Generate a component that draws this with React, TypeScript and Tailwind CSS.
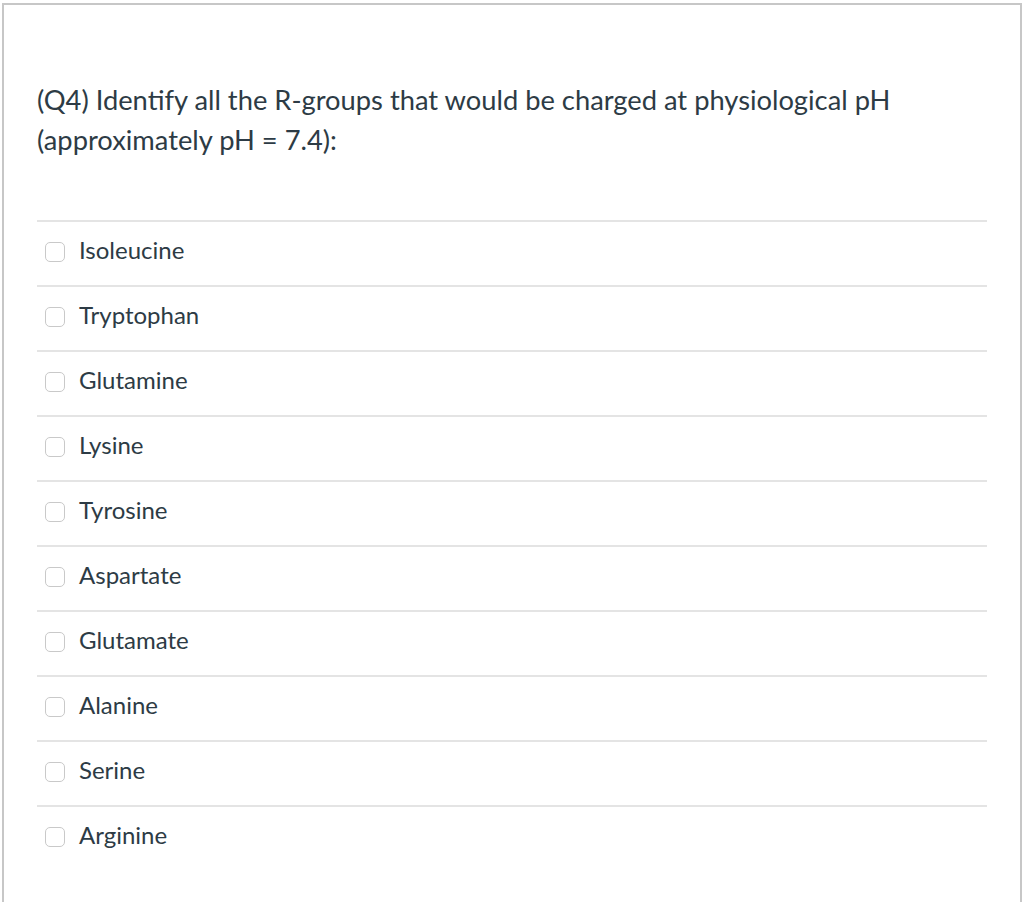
import React from 'react';

const answers = [
  'Isoleucine',
  'Tryptophan',
  'Glutamine',
  'Lysine',
  'Tyrosine',
  'Aspartate',
  'Glutamate',
  'Alanine',
  'Serine',
  'Arginine',
];

export default function App() {
  return (
    <div className="h-[902px] overflow-hidden bg-white pt-[3px] px-[2px]" style={{ fontFamily: 'Lato, "Noto Sans", sans-serif' }}>
      <div className="h-[940px] border-2 border-[#c7c7c7] bg-white px-[33px] text-[#2d3b45]">
        <h2 className="pt-[75px] text-[27.3px] leading-[40px] font-normal">
          (Q4) Identify all the R-groups that would be charged at physiological pH (approximately pH = 7.4):
        </h2>
        <div className="mt-[60px]">
          {answers.map((a) => (
            <label key={a} className="flex h-[65px] items-center border-t-2 border-[#e4e4e4] pb-[3px] pl-[8px]">
              <span className="h-[20px] w-[20px] rounded-[5px] border border-[#c9c9c9] bg-white" />
              <span className="mb-[4px] ml-[14px] text-[24px] leading-none">{a}</span>
            </label>
          ))}
        </div>
      </div>
    </div>
  );
}
